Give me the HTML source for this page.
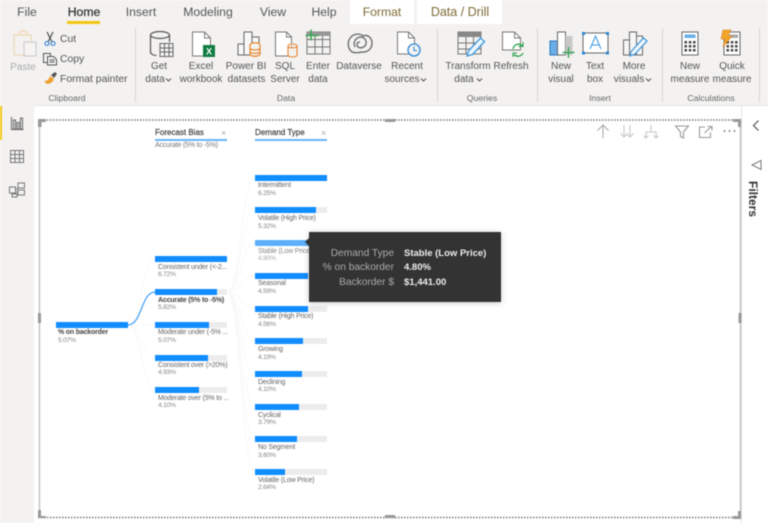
<!DOCTYPE html>
<html><head><meta charset="utf-8">
<style>
html,body{margin:0;padding:0}
body{width:768px;height:523px;overflow:hidden;background:#fff;position:relative;font-family:"Liberation Sans",sans-serif}
#p{position:absolute;left:0;top:0;width:768px;height:523px;overflow:hidden;filter:blur(.4px)}
.a{position:absolute;white-space:nowrap}
.t{position:absolute;white-space:nowrap;transform:translateX(-50%);font-size:10px;line-height:13px;color:#555;text-align:center}
.tab{position:absolute;top:5px;font-size:12.2px;line-height:15px;color:#555;transform:translateX(-50%);white-space:nowrap}
.g{position:absolute;top:93px;font-size:8.7px;line-height:11px;color:#666;transform:translateX(-50%);white-space:nowrap}
.s{position:absolute;top:28px;width:1px;background:#d8d6d4;height:74px}
.bar{position:absolute;height:5.5px;width:72px;background:#ececec}
.bar i{display:block;height:100%;background:#118dff}
.l{position:absolute;font-size:7px;letter-spacing:-.18px;line-height:8px;color:#666;white-space:nowrap;margin-top:1px}
.v{position:absolute;font-size:6.8px;letter-spacing:-.3px;line-height:8px;color:#888;white-space:nowrap;margin-top:1px}
svg{position:absolute;overflow:visible}
.tip{position:absolute;font-size:10.2px;line-height:13px;white-space:nowrap}
.b{font-size:9.5px;font-weight:700;color:#eee}
.h{position:absolute;top:128px;font-size:8px;line-height:10px;color:#444;-webkit-text-stroke:.2px #444;white-space:nowrap}
.x{position:absolute;top:128px;font-size:9px;line-height:11px;color:#aaa}
.u{position:absolute;top:139px;width:72px;height:2px;background:#6ab4f8}
</style></head><body><div id="p">

<!-- ribbon -->
<div class="a" style="left:0;top:0;width:768px;height:105px;background:#f3f2f1"></div>
<div class="a" style="left:350px;top:0;width:64px;height:24px;background:#fff"></div>
<div class="a" style="left:417px;top:0;width:85px;height:24px;background:#fff"></div>
<div class="tab" style="left:27px">File</div>
<div class="tab" style="left:84px;color:#333;-webkit-text-stroke:.25px #333">Home</div>
<div class="a" style="left:67px;top:21px;width:33px;height:2.5px;background:#f2c811"></div>
<div class="tab" style="left:141px">Insert</div>
<div class="tab" style="left:208px">Modeling</div>
<div class="tab" style="left:273px">View</div>
<div class="tab" style="left:324px">Help</div>
<div class="tab" style="left:382px;color:#7d6a35">Format</div>
<div class="tab" style="left:460px;color:#7d6a35;font-size:12.5px">Data / Drill</div>

<div class="s" style="left:135px"></div><div class="s" style="left:437px"></div><div class="s" style="left:537px"></div><div class="s" style="left:662px"></div><div class="s" style="left:759px"></div>

<!-- icons -->
<svg style="left:0;top:0" width="768" height="105" fill="none">
<g stroke="#f0dcc0" stroke-width="1.5"><rect x="14" y="35" width="17" height="20"/><path d="M19 35v-3h2l1-1.500h2l1 1.500h2v3z" fill="#f7f0e6"/></g>
<rect x="24" y="42" width="12" height="14" fill="#f5f4f3" stroke="#c9c9c9" stroke-width="1"/>
<g stroke="#444" stroke-width="1.100"><path d="M47 32l5 10M53 32l-5 10"/><circle cx="47" cy="43.500" r="2" stroke="#2b7cd3"/><circle cx="53" cy="43.500" r="2" stroke="#2b7cd3"/></g>
<g stroke="#555" stroke-width="1"><path d="M43.500 53.500h7l0 9h-7z"/><path d="M47.500 56.500h6l3 3v5.500h-9z" fill="#f3f2f1"/><path d="M49.500 60h5M49.500 62h5"/></g>
<path d="M44 81c4 0 5-2 6-5l4 3c-1 3-4 5-7 5z" fill="#f0a030"/><path d="M51 75l4-3 2 2-3 4z" fill="#555"/>
<g stroke="#555" stroke-width="1.200"><ellipse cx="160" cy="35" rx="9.500" ry="3.500"/><path d="M150.500 35v17c0 2 3 3.500 6 3.500M169.500 35v7"/></g>
<g stroke="#666" stroke-width="1" fill="#f3f2f1"><rect x="160" y="43.500" width="13" height="13"/><path d="M160 48h13M160 52h13M164.500 44v12M169 44v12"/></g>
<path d="M192.500 32h12l6 6v18h-18z" fill="#fff" stroke="#777" stroke-width="1"/><path d="M204.500 32v6h6" stroke="#777"/>
<rect x="203" y="45" width="12" height="12" fill="#107c41"/><text x="209" y="54.500" font-family="Liberation Sans" font-size="9" font-weight="700" fill="#fff" text-anchor="middle">X</text>
<g stroke="#666" stroke-width="1" fill="#f8f8f8"><rect x="238" y="44" width="7" height="11"/><rect x="244" y="32" width="8" height="23"/><rect x="252" y="37" width="7" height="7"/></g>
<g stroke="#e8862e" stroke-width="1.200" fill="#f3f2f1"><path d="M250 45c0-3 10-3 10 0v9c0 3-10 3-10 0z"/><path d="M250 48c0 2.500 10 2.500 10 0M250 51.500c0 2.500 10 2.500 10 0" /></g>
<path d="M275.500 32h11l5 5v19h-16z" fill="#fff" stroke="#777"/><path d="M286.500 32v5h5" stroke="#777"/>
<path d="M288 46c0-2.500 9-2.500 9 0v9c0 2.500-9 2.500-9 0z M288 46c0 2.500 9 2.500 9 0" fill="#f3f2f1" stroke="#e8862e" stroke-width="1.100"/>
<g stroke="#777" stroke-width="1"><rect x="307" y="32" width="23" height="22"/><path d="M307 39.500h23M307 47h23M315 32v22M322.500 32v22"/></g><rect x="307" y="32" width="23" height="4" fill="#999"/>
<path d="M311 29.500v11M305.500 35.500h13" stroke="#3aa757" stroke-width="1.600"/>
<g stroke="#666" stroke-width="1.300"><path d="M352 52c-5-4-5-12 0-16 4-3 9-2 11 0 5-2 9 2 9 7 0 6-5 10-11 9-3 1-6 1-9 0z"/><path d="M355 47c-2-4 0-9 5-10 4 0 7 3 6 7-1 3-5 5-8 3-2-2-1-5 2-5"/></g>
<path d="M397.500 32h11l6 6v16h-17z" fill="#fff" stroke="#777"/><path d="M408.500 32v6h6" stroke="#777"/>
<circle cx="414" cy="50" r="6" fill="#f3f2f1" stroke="#2b88d8" stroke-width="1.300"/><path d="M414 46.500v4h3" stroke="#2b88d8"/>
<g stroke="#777" stroke-width="1"><rect x="458" y="32" width="23" height="22"/><path d="M458 43h23M458 49h23M466 37v17M473.500 37v17"/></g><rect x="458" y="32" width="23" height="5" fill="#888"/>
<path d="M467 56l1.500-5 12-13 4 3.500-12 13z" fill="#eef6fd" stroke="#3a96dd" stroke-width="1.300"/>
<path d="M502.500 32h12l6 6v12h-18z" fill="#fff" stroke="#777"/><path d="M514.500 32v6h6" stroke="#777"/>
<g stroke="#2ea44f" stroke-width="1.300"><path d="M513 49a5.500 5.500 0 0 1 9.500-3"/><path d="M523 53a5.500 5.500 0 0 1-9 1.500"/></g><path d="M523 42v4.500h-4.500M513 57v-4h4" stroke="#2ea44f" stroke-width="1.100"/>
<rect x="550" y="41" width="8" height="14" fill="#6aaee8" stroke="#2b78c2"/><rect x="557.500" y="32" width="8" height="23" fill="#fff" stroke="#666"/><rect x="565.500" y="36" width="7" height="19" fill="#c8c8c8"/>
<path d="M568.500 47v11M562.500 52.500h12" stroke="#3aa757" stroke-width="1.400"/>
<rect x="583" y="33" width="25" height="20" fill="#fff" stroke="#666"/><g fill="#2b88d8"><rect x="582" y="32" width="3" height="3"/><rect x="606" y="32" width="3" height="3"/><rect x="582" y="51.500" width="3" height="3"/><rect x="606" y="51.500" width="3" height="3"/></g>
<path d="M590 49l5.500-13 5.500 13M592 45h7" stroke="#3a96dd" stroke-width="1"/>
<g stroke="#666" stroke-width="1" fill="#f6f6f6"><rect x="623.500" y="40" width="6" height="15"/><rect x="629.500" y="32" width="7" height="23"/><rect x="636.500" y="36" width="6" height="19"/></g>
<path d="M630 56l1.500-5 12-13 3.500 3-12 13z" fill="#eef6fd" stroke="#3a96dd" stroke-width="1.200"/>
<rect x="682" y="32" width="16" height="23" fill="#fff" stroke="#666" stroke-width="1"/><rect x="684.500" y="34.500" width="11" height="3.500" fill="#6aaee8"/>
<g fill="#444"><rect x="684.500" y="41" width="2.500" height="2.500"/><rect x="688.800" y="41" width="2.500" height="2.500"/><rect x="693" y="41" width="2.500" height="2.500"/><rect x="684.500" y="45" width="2.500" height="2.500"/><rect x="688.800" y="45" width="2.500" height="2.500"/><rect x="693" y="45" width="2.500" height="2.500"/><rect x="684.500" y="49" width="2.500" height="2.500"/><rect x="688.800" y="49" width="2.500" height="2.500"/><rect x="693" y="49" width="2.500" height="2.500"/></g>
<rect x="724" y="32" width="16" height="23" fill="#fff" stroke="#666"/><rect x="729" y="34.500" width="9" height="3.500" fill="#aaa"/>
<g fill="#444"><rect x="726.500" y="41" width="2.500" height="2.500"/><rect x="730.800" y="41" width="2.500" height="2.500"/><rect x="735" y="41" width="2.500" height="2.500"/><rect x="726.500" y="45" width="2.500" height="2.500"/><rect x="730.800" y="45" width="2.500" height="2.500"/><rect x="735" y="45" width="2.500" height="2.500"/><rect x="726.500" y="49" width="2.500" height="2.500"/><rect x="730.800" y="49" width="2.500" height="2.500"/><rect x="735" y="49" width="2.500" height="2.500"/></g>
<path d="M723 30h8l-3 6h4l-9 11 2-8h-4z" fill="#f2a52a" stroke="#d9831f" stroke-width=".6"/>
</svg>

<div class="t" style="left:23px;top:61px;color:#aaa">Paste</div>
<div class="a" style="left:60px;top:33px;font-size:10.4px;line-height:13px;color:#555">Cut</div>
<div class="a" style="left:60px;top:53px;font-size:10.4px;line-height:13px;color:#555">Copy</div>
<div class="a" style="left:60px;top:73px;font-size:10.4px;line-height:13px;color:#555">Format painter</div>
<div class="g" style="left:67px">Clipboard</div>
<div class="g" style="left:286px">Data</div>
<div class="g" style="left:482px">Queries</div>
<div class="g" style="left:600px">Insert</div>
<div class="g" style="left:711px">Calculations</div>

<div class="t" style="left:159px;top:60px">Get</div><div class="t" style="left:155px;top:73px">data</div>
<div class="t" style="left:201px;top:60px">Excel</div><div class="t" style="left:201px;top:73px">workbook</div>
<div class="t" style="left:246px;top:60px">Power BI</div><div class="t" style="left:246.500px;top:73px">datasets</div>
<div class="t" style="left:285px;top:60px">SQL</div><div class="t" style="left:285px;top:73px">Server</div>
<div class="t" style="left:318px;top:60px">Enter</div><div class="t" style="left:318px;top:73px">data</div>
<div class="t" style="left:359px;top:60px">Dataverse</div>
<div class="t" style="left:407px;top:60px">Recent</div><div class="t" style="left:402px;top:73px">sources</div>
<div class="t" style="left:468px;top:60px">Transform</div><div class="t" style="left:464px;top:73px">data</div>
<div class="t" style="left:511px;top:60px">Refresh</div>
<div class="t" style="left:561px;top:60px">New</div><div class="t" style="left:561px;top:73px">visual</div>
<div class="t" style="left:595px;top:60px">Text</div><div class="t" style="left:595px;top:73px">box</div>
<div class="t" style="left:634px;top:60px">More</div><div class="t" style="left:629px;top:73px">visuals</div>
<div class="t" style="left:690px;top:60px">New</div><div class="t" style="left:690px;top:73px">measure</div>
<div class="t" style="left:732px;top:60px">Quick</div><div class="t" style="left:732px;top:73px">measure</div>
<svg style="left:0;top:0" width="768" height="105" fill="none" stroke="#555" stroke-width="1"><path d="M166 78.500l2.500 2.500 2.500-2.500M421 78.500l2.500 2.500 2.500-2.500M477 78.500l2.500 2.500 2.500-2.500M646 78.500l2.500 2.500 2.500-2.500"/></svg>

<!-- sidebar -->
<div class="a" style="left:0;top:105px;width:34px;height:418px;background:#f3f2f1"></div>
<div class="a" style="left:0;top:106px;width:2px;height:34px;background:#f2c811"></div>
<div class="a" style="left:34px;top:105px;width:734px;height:1px;background:#e6e6e6"></div>
<svg style="left:0;top:0" width="34" height="210" fill="none" stroke="#777" stroke-width="1">
<path d="M11.500 117v12.500h12" stroke-width="1.200"/><path d="M13.500 120h2v9h-2zM17 122.500h2v6.500h-2zM20.500 118h2v11h-2z" stroke="#666"/>
<rect x="10.500" y="150.500" width="13" height="12"/><path d="M10.500 154.500h13M10.500 158.500h13M15 150.500v12M19.500 150.500v12"/>
<rect x="9.500" y="187" width="6" height="6"/><rect x="18" y="183" width="6.500" height="5"/><rect x="18" y="190" width="6.500" height="5"/><path d="M15.500 189h2.500M15.500 192h2.500"/><rect x="12" y="194" width="5" height="3"/>
</svg>

<!-- right pane -->
<div class="a" style="left:741px;top:106px;width:1px;height:417px;background:#e4e4e4"></div>
<svg style="left:0;top:0" width="768" height="523" fill="none">
<path d="M758.500 120.500l-5 5 5 5" stroke="#555" stroke-width="1.200"/>
<path d="M752 165l9-4.500v9z" stroke="#777" stroke-width="1"/>
<path d="M38 120h702M38 517.500h702" stroke="#777" stroke-width="1.500" stroke-dasharray="1.500 1.500"/>
<path d="M39.500 120v396M740.500 120v396" stroke="#bbb" stroke-width="1.300"/>
<path d="M38 119h8v3h-4.500v5h-3.500z" fill="#999"/>
<path d="M733 119h8v8h-3v-5h-5z" fill="#999"/>
<path d="M733 518h8v-8h-3v5h-5z" fill="#999" transform="translate(0 1)"/>
<path d="M38 518h8v-2h-5v-6h-3z" fill="#999"/>
<rect x="38" y="313" width="3" height="10" fill="#999"/><rect x="738.500" y="313" width="3" height="10" fill="#999"/>
<rect x="385" y="119" width="10" height="3" fill="#999"/><rect x="385" y="515" width="10" height="3" fill="#999"/>
<g stroke="#aaa" stroke-width="1.100"><path d="M603 138v-13M597.500 130.500l5.500-5.500 5.500 5.500"/>
<g stroke="#c8c8c8"><path d="M624 125v12M620.500 133.500l3.500 3.500 3.500-3.500M630 125v12M626.500 133.500l3.500 3.500 3.500-3.500"/><path d="M651 125v7M646 138v-6h10v6M643.500 135.500l2.500 2.500 2.500-2.500M653.500 135.500l2.500 2.500 2.500-2.500"/></g>
<g stroke="#999"><path d="M675.500 126h13l-5 6v6l-3-1.500v-4.500z"/><path d="M705 127h-5.500v10.500h11v-5M704.500 133l7-6.500M707.500 126.500h4.500v4" /></g></g>
<g fill="#888"><circle cx="724.500" cy="131" r="1"/><circle cx="729.500" cy="131" r="1"/><circle cx="734.500" cy="131" r="1"/></g>
<g stroke="#f8f8f8" stroke-width="1">
<path d="M128 325C142 325 141 259 155 259M128 325H155M128 325C142 325 141 358 155 358M128 325C142 325 141 390 155 390"/>
<path d="M227 292C241 292 241 177 255 177M227 292C241 292 241 210 255 210M227 292C241 292 241 243 255 243M227 292C241 292 241 276 255 276M227 292C241 292 241 308 255 308M227 292C241 292 241 341 255 341M227 292C241 292 241 374 255 374M227 292C241 292 241 406 255 406M227 292C241 292 241 439 255 439M227 292C241 292 241 472 255 472"/>
</g>
<path d="M128 325C142 325 141 292 155 292" stroke="#3f9cf5" stroke-width="1.200"/>
</svg>

<!-- column headers -->
<div class="h" style="left:155px">Forecast Bias</div>
<div class="x" style="left:221px">×</div>
<div class="u" style="left:155px"></div>
<div class="a" style="left:155px;top:142px;font-size:7px;letter-spacing:-.18px;line-height:8px;color:#777">Accurate (5% to -5%)</div>
<div class="h" style="left:255px">Demand Type</div>
<div class="x" style="left:321px">×</div>
<div class="u" style="left:255px"></div>

<!-- col1 -->
<div class="bar" style="left:56px;top:322px"><i style="width:72px"></i></div>
<div class="l" style="left:58px;top:328px;font-weight:700;color:#444">% on backorder</div>
<div class="v" style="left:58px;top:336px">5.07%</div>

<!-- col2 -->
<div class="bar" style="left:155px;top:256px"><i style="width:72px"></i></div>
<div class="l" style="left:158px;top:263px">Consistent under (&lt;-2...</div><div class="v" style="left:158px;top:270px">6.72%</div>
<div class="bar" style="left:155px;top:289px"><i style="width:62px"></i></div>
<div class="l" style="left:158px;top:296px;font-weight:700;color:#444">Accurate (5% to -5%)</div><div class="v" style="left:158px;top:303px">5.82%</div>
<div class="bar" style="left:155px;top:322px"><i style="width:54px"></i></div>
<div class="l" style="left:158px;top:328px">Moderate under (-5% ...</div><div class="v" style="left:158px;top:336px">5.07%</div>
<div class="bar" style="left:155px;top:355px"><i style="width:53px"></i></div>
<div class="l" style="left:158px;top:361px">Consistent over (&gt;20%)</div><div class="v" style="left:158px;top:368px">4.93%</div>
<div class="bar" style="left:155px;top:387px"><i style="width:44px"></i></div>
<div class="l" style="left:158px;top:394px">Moderate over (5% to ...</div><div class="v" style="left:158px;top:401px">4.10%</div>

<!-- col3 -->
<div class="bar" style="left:255px;top:175px"><i style="width:72px"></i></div>
<div class="l" style="left:258px;top:181px">Intermittent</div><div class="v" style="left:258px;top:189px">6.25%</div>
<div class="bar" style="left:255px;top:207px"><i style="width:61px"></i></div>
<div class="l" style="left:258px;top:214px">Volatile (High Price)</div><div class="v" style="left:258px;top:222px">5.32%</div>
<div class="bar" style="left:255px;top:240px"><i style="width:55px;background:#5cb0fa"></i></div>
<div class="l" style="left:258px;top:247px;color:#888">Stable (Low Price)</div><div class="v" style="left:258px;top:254px;color:#aaa">4.80%</div>
<div class="bar" style="left:255px;top:273px"><i style="width:53px"></i></div>
<div class="l" style="left:258px;top:279px">Seasonal</div><div class="v" style="left:258px;top:287px">4.59%</div>
<div class="bar" style="left:255px;top:306px"><i style="width:52.500px"></i></div>
<div class="l" style="left:258px;top:312px">Stable (High Price)</div><div class="v" style="left:258px;top:320px">4.56%</div>
<div class="bar" style="left:255px;top:338px"><i style="width:48px"></i></div>
<div class="l" style="left:258px;top:345px">Growing</div><div class="v" style="left:258px;top:353px">4.19%</div>
<div class="bar" style="left:255px;top:371px"><i style="width:47px"></i></div>
<div class="l" style="left:258px;top:378px">Declining</div><div class="v" style="left:258px;top:385px">4.10%</div>
<div class="bar" style="left:255px;top:404px"><i style="width:44px"></i></div>
<div class="l" style="left:258px;top:411px">Cyclical</div><div class="v" style="left:258px;top:418px">3.79%</div>
<div class="bar" style="left:255px;top:436px"><i style="width:42px"></i></div>
<div class="l" style="left:258px;top:443px">No Segment</div><div class="v" style="left:258px;top:451px">3.60%</div>
<div class="bar" style="left:255px;top:469px"><i style="width:30px"></i></div>
<div class="l" style="left:258px;top:476px">Volatile (Low Price)</div><div class="v" style="left:258px;top:483px">2.64%</div>

<!-- tooltip -->
<div class="a" style="left:309px;top:232px;width:192px;height:70px;background:#333;box-shadow:0 1px 6px rgba(0,0,0,.22)"></div>
<div class="a" style="left:305px;top:238px;width:0;height:0;border:4.500px solid transparent;border-right:4.500px solid #333;border-left:0"></div>
<div class="tip" style="right:374px;top:247px;color:#aaa">Demand Type</div>
<div class="tip" style="right:374px;top:261px;color:#aaa">% on backorder</div>
<div class="tip" style="right:374px;top:276px;color:#aaa">Backorder $</div>
<div class="tip b" style="left:404px;top:247px">Stable (Low Price)</div>
<div class="tip b" style="left:404px;top:261px">4.80%</div>
<div class="tip b" style="left:404px;top:276px">$1,441.00</div>

<!-- Filters -->
<div class="a" style="left:735px;top:192px;width:36px;text-align:center;font-size:12px;line-height:14px;font-weight:700;color:#333;transform:rotate(90deg)">Filters</div>
</div></body></html>
